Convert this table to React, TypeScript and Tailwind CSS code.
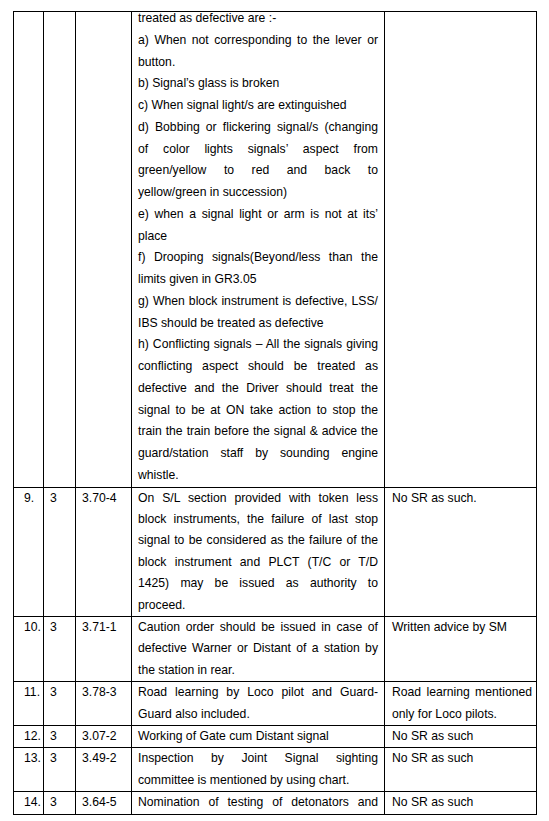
import React from 'react';

type Row = {
  no: string;
  ch: string;
  para: string;
  text: [string, boolean][];
  sr: [string, boolean][];
};

// each line: [text, justified]
const firstRow: [string, boolean][] = [
  ['treated as defective are :-', false],
  ['a) When not corresponding to the lever or', true],
  ['button.', false],
  ['b) Signal’s glass is broken', false],
  ['c) When signal light/s are extinguished', false],
  ['d) Bobbing or flickering signal/s (changing', true],
  ['of color lights signals’ aspect from', true],
  ['green/yellow to red and back to', true],
  ['yellow/green in succession)', false],
  ['e) when a signal light or arm is not at its’', true],
  ['place', false],
  ['f) Drooping signals(Beyond/less than the', true],
  ['limits given in GR3.05', false],
  ['g) When block instrument is defective, LSS/', true],
  ['IBS should be treated as defective', false],
  ['h) Conflicting signals – All the signals giving', true],
  ['conflicting aspect should be treated as', true],
  ['defective and the Driver should treat the', true],
  ['signal to be at ON take action to stop the', true],
  ['train the train before the signal & advice the', true],
  ['guard/station staff by sounding engine', true],
  ['whistle.', false],
];

const rows: Row[] = [
  {
    no: '9.',
    ch: '3',
    para: '3.70-4',
    text: [
      ['On S/L section provided with token less', true],
      ['block instruments, the failure of last stop', true],
      ['signal to be considered as the failure of the', true],
      ['block instrument and PLCT (T/C or T/D', true],
      ['1425) may be issued as authority to', true],
      ['proceed.', false],
    ],
    sr: [['No SR as such.', false]],
  },
  {
    no: '10.',
    ch: '3',
    para: '3.71-1',
    text: [
      ['Caution order should be issued in case of', true],
      ['defective Warner or Distant of a station by', true],
      ['the station in rear.', false],
    ],
    sr: [['Written advice by SM', false]],
  },
  {
    no: '11.',
    ch: '3',
    para: '3.78-3',
    text: [
      ['Road learning by Loco pilot and Guard-', true],
      ['Guard also included.', false],
    ],
    sr: [
      ['Road learning mentioned', true],
      ['only for Loco pilots.', false],
    ],
  },
  {
    no: '12.',
    ch: '3',
    para: '3.07-2',
    text: [['Working of Gate cum Distant signal', false]],
    sr: [['No SR as such', false]],
  },
  {
    no: '13.',
    ch: '3',
    para: '3.49-2',
    text: [
      ['Inspection by Joint Signal sighting', true],
      ['committee is mentioned by using chart.', false],
    ],
    sr: [['No SR as such', false]],
  },
  {
    no: '14.',
    ch: '3',
    para: '3.64-5',
    text: [['Nomination of testing of detonators and', true]],
    sr: [['No SR as such', false]],
  },
];

function Lines({ lines }: { lines: [string, boolean][] }) {
  return (
    <>
      {lines.map(([t, j], i) => (
        <div
          key={i}
          className={j ? 'whitespace-nowrap text-justify [text-align-last:justify]' : 'whitespace-nowrap'}
        >
          {t}
        </div>
      ))}
    </>
  );
}

const cell = 'border border-black align-top p-0';

export default function App() {
  return (
    <div
      className="min-h-screen bg-white pt-[11px] pl-[13px] text-[12.2px] leading-[21.4px] text-black"
      style={{ fontFamily: '"Liberation Sans", Arial, sans-serif' }}
    >
      <table className="table-fixed border-collapse w-[523px]">
        <colgroup>
          <col className="w-[30px]" />
          <col className="w-[32px]" />
          <col className="w-[56px]" />
          <col className="w-[253px]" />
          <col className="w-[152px]" />
        </colgroup>
        <tbody>
          {/* continued row from previous page */}
          <tr>
            <td className={cell}></td>
            <td className={cell}></td>
            <td className={cell}></td>
            <td className={cell + ' pl-[6px] pr-[6px]'}>
              <div className="-mt-[4px] leading-[21.75px]">
                <Lines lines={firstRow} />
              </div>
            </td>
            <td className={cell}></td>
          </tr>

          {rows.map((r) => (
            <tr key={r.no}>
              <td className={cell + ' pl-[10px]'}>{r.no}</td>
              <td className={cell + ' pl-[6px]'}>{r.ch}</td>
              <td className={cell + ' pl-[6px]'}>{r.para}</td>
              <td className={cell + ' pl-[6px] pr-[6px]'}>
                <Lines lines={r.text} />
              </td>
              <td className={cell + ' pl-[7px] pr-[4px]'}>
                <Lines lines={r.sr} />
              </td>
            </tr>
          ))}
        </tbody>
      </table>
    </div>
  );
}
